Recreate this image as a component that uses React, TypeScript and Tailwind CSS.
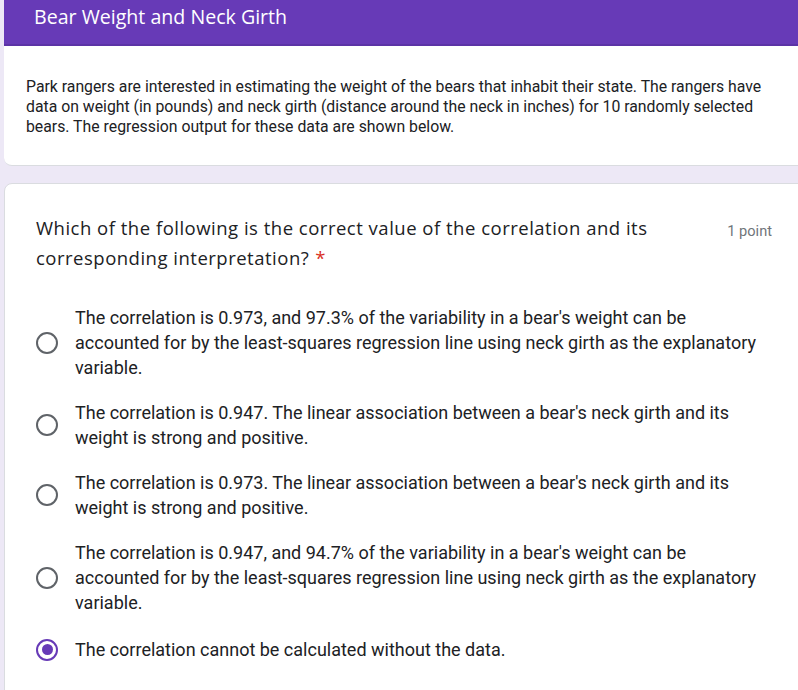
const OPTIONS = [
  {
    text: "The correlation is 0.973, and 97.3% of the variability in a bear's weight can be accounted for by the least-squares regression line using neck girth as the explanatory variable.",
  },
  {
    text: "The correlation is 0.947. The linear association between a bear's neck girth and its weight is strong and positive.",
  },
  {
    text: "The correlation is 0.973. The linear association between a bear's neck girth and its weight is strong and positive.",
  },
  {
    text: "The correlation is 0.947, and 94.7% of the variability in a bear's weight can be accounted for by the least-squares regression line using neck girth as the explanatory variable.",
  },
  {
    text: "The correlation cannot be calculated without the data.",
    checked: true,
  },
];

function Radio({ checked }: { checked?: boolean }) {
  if (checked) {
    return (
      <span className="flex h-[22px] w-[22px] shrink-0 items-center justify-center rounded-full border-2 border-[#673ab7]">
        <span className="h-[11px] w-[11px] rounded-full bg-[#673ab7]" />
      </span>
    );
  }
  return <span className="h-[22px] w-[22px] shrink-0 rounded-full border-2 border-[#5f6368]" />;
}

export default function App() {
  return (
    <div className="h-[690px] w-[798px] overflow-hidden bg-[#ede8f6] pl-[4px] font-['Roboto',sans-serif]">
      <section className="w-[830px] overflow-hidden rounded-bl-lg border-b border-[#dadce0] bg-white">
        <div className="h-[46px] border-b-2 border-[#5c33a6] bg-[#673ab7] pl-[30px] pt-[4px]">
          <h1 className="font-['Open_Sans',sans-serif] text-[19.6px] leading-[26px] text-white">
            Bear Weight and Neck Girth
          </h1>
        </div>
        <p className="w-[770px] pb-[28px] pl-[22px] pt-[31px] text-[15.8px] leading-[20px] text-[#202124]">
          Park rangers are interested in estimating the weight of the bears that inhabit their state. The
          rangers have data on weight (in pounds) and neck girth (distance around the neck in inches) for 10
          randomly selected bears. The regression output for these data are shown below.
        </p>
      </section>

      <section className="mt-[17px] w-[830px] rounded-tl-lg border border-[#dadce0] bg-white pb-8 pl-[31px] pr-[61px] pt-[29px]">
        <div className="flex items-start justify-between">
          <h2 className="w-[660px] font-['Open_Sans',sans-serif] text-[18.5px] leading-[30px] tracking-[0.5px] text-[#202124]">
            Which of the following is the correct value of the correlation and its corresponding
            interpretation?<span className="ml-[6px] text-[#d93025]">*</span>
          </h2>
          <span className="pt-[5px] text-[14.6px] leading-[26px] text-[#70757a]">1 point</span>
        </div>

        <div className="mt-[32px] flex flex-col gap-[20px]">
          {OPTIONS.map((option) => (
            <label key={option.text} className={`flex items-center ${option.checked ? "mt-[2px]" : ""}`}>
              <Radio checked={option.checked} />
              <span className="ml-[17px] w-[700px] text-[18px] leading-[25px] text-[#202124]">
                {option.text}
              </span>
            </label>
          ))}
        </div>
      </section>
    </div>
  );
}
